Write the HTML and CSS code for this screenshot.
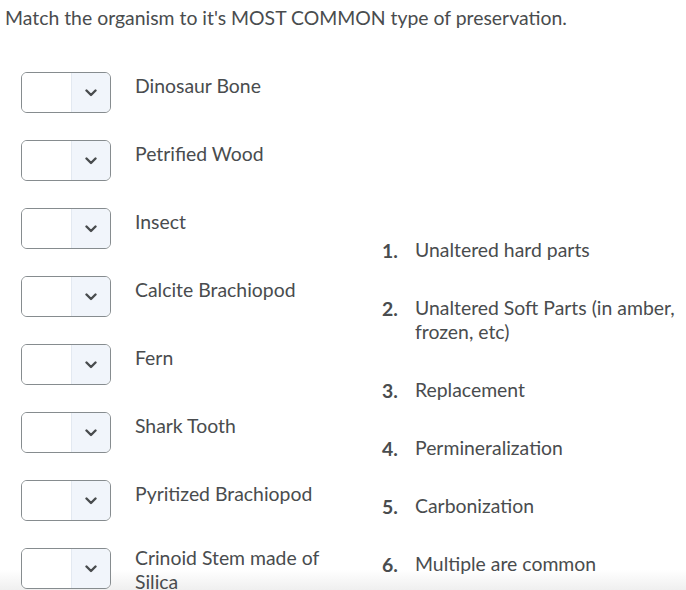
FILE: index.html
```html
<!DOCTYPE html>
<html>
<head>
<meta charset="utf-8">
<link rel="stylesheet" href="styles.css">
</head>
<body>
<h1 class="title">Match the organism to it's MOST COMMON type of preservation.</h1>
<div class="matching">
  <div class="items">
    <div class="row"><div class="select"><span class="value"></span><span class="toggle"><svg width="12" height="8" viewBox="0 0 12 8"><path d="M1.5 1.5 L6 6 L10.5 1.5" fill="none" stroke="#494c4e" stroke-width="2.4" stroke-linecap="round" stroke-linejoin="round"/></svg></span></div><div class="label">Dinosaur Bone</div></div>
    <div class="row"><div class="select"><span class="value"></span><span class="toggle"><svg width="12" height="8" viewBox="0 0 12 8"><path d="M1.5 1.5 L6 6 L10.5 1.5" fill="none" stroke="#494c4e" stroke-width="2.4" stroke-linecap="round" stroke-linejoin="round"/></svg></span></div><div class="label">Petrified Wood</div></div>
    <div class="row"><div class="select"><span class="value"></span><span class="toggle"><svg width="12" height="8" viewBox="0 0 12 8"><path d="M1.5 1.5 L6 6 L10.5 1.5" fill="none" stroke="#494c4e" stroke-width="2.4" stroke-linecap="round" stroke-linejoin="round"/></svg></span></div><div class="label">Insect</div></div>
    <div class="row"><div class="select"><span class="value"></span><span class="toggle"><svg width="12" height="8" viewBox="0 0 12 8"><path d="M1.5 1.5 L6 6 L10.5 1.5" fill="none" stroke="#494c4e" stroke-width="2.4" stroke-linecap="round" stroke-linejoin="round"/></svg></span></div><div class="label">Calcite Brachiopod</div></div>
    <div class="row"><div class="select"><span class="value"></span><span class="toggle"><svg width="12" height="8" viewBox="0 0 12 8"><path d="M1.5 1.5 L6 6 L10.5 1.5" fill="none" stroke="#494c4e" stroke-width="2.4" stroke-linecap="round" stroke-linejoin="round"/></svg></span></div><div class="label">Fern</div></div>
    <div class="row"><div class="select"><span class="value"></span><span class="toggle"><svg width="12" height="8" viewBox="0 0 12 8"><path d="M1.5 1.5 L6 6 L10.5 1.5" fill="none" stroke="#494c4e" stroke-width="2.4" stroke-linecap="round" stroke-linejoin="round"/></svg></span></div><div class="label">Shark Tooth</div></div>
    <div class="row"><div class="select"><span class="value"></span><span class="toggle"><svg width="12" height="8" viewBox="0 0 12 8"><path d="M1.5 1.5 L6 6 L10.5 1.5" fill="none" stroke="#494c4e" stroke-width="2.4" stroke-linecap="round" stroke-linejoin="round"/></svg></span></div><div class="label">Pyritized Brachiopod</div></div>
    <div class="row"><div class="select"><span class="value"></span><span class="toggle"><svg width="12" height="8" viewBox="0 0 12 8"><path d="M1.5 1.5 L6 6 L10.5 1.5" fill="none" stroke="#494c4e" stroke-width="2.4" stroke-linecap="round" stroke-linejoin="round"/></svg></span></div><div class="label label-multi">Crinoid Stem made of Silica</div></div>
  </div>
  <ol class="choices">
    <li class="choice"><span class="num">1.</span><span class="text">Unaltered hard parts</span></li>
    <li class="choice"><span class="num">2.</span><span class="text">Unaltered Soft Parts (in amber, frozen, etc)</span></li>
    <li class="choice"><span class="num">3.</span><span class="text">Replacement</span></li>
    <li class="choice"><span class="num">4.</span><span class="text">Permineralization</span></li>
    <li class="choice"><span class="num">5.</span><span class="text">Carbonization</span></li>
    <li class="choice"><span class="num">6.</span><span class="text">Multiple are common</span></li>
  </ol>
</div>
</body>
</html>
```
FILE: styles.css
```css
html, body {
  margin: 0;
  padding: 0;
}
html {
  background: #ffffff;
}
body {
  font-family: Lato, "Noto Sans", sans-serif;
  color: #494c4e;
  font-size: 19.4px;
  line-height: 24px;
  padding: 6px 0 0 5px;
  overflow: hidden;
  height: 590px;
  box-sizing: border-box;
  background: linear-gradient(to bottom, #ffffff 0, #ffffff 570px, #efefef 590px);
}
.title {
  font-size: 19.4px;
  font-weight: 400;
  line-height: 24px;
  margin: 0;
}
.matching {
  display: flex;
  margin-top: 42px;
}
.items {
  display: flex;
  flex-direction: column;
  gap: 27px;
  width: 361px;
  padding-left: 16px;
}
.row {
  display: flex;
  align-items: flex-start;
  min-height: 41px;
}
.select {
  width: 90px;
  height: 41px;
  box-sizing: border-box;
  border: 1px solid #868c8f;
  border-radius: 6px;
  display: flex;
  overflow: hidden;
  flex-shrink: 0;
}
.value {
  width: 49px;
  background: #fff;
  border-right: 1px solid #e3e9f1;
}
.toggle {
  flex: 1;
  background: #f1f5fb;
  display: flex;
  align-items: center;
  justify-content: center;
}
.toggle svg {
  display: block;
  margin-top: 1px;
}
.label {
  margin-left: 24px;
  padding-top: 2px;
  width: 200px;
}
.label-multi {
  padding-top: 0;
  margin-top: -2px;
}
.choices {
  list-style: none;
  margin: 0;
  padding: 166px 0 0 0;
  display: flex;
  flex-direction: column;
  gap: 34px;
}
.choice {
  display: flex;
}
.num {
  width: 33px;
  flex-shrink: 0;
  font-weight: 700;
  position: relative;
  top: 1px;
}
.text {
  width: 270px;
}
```
